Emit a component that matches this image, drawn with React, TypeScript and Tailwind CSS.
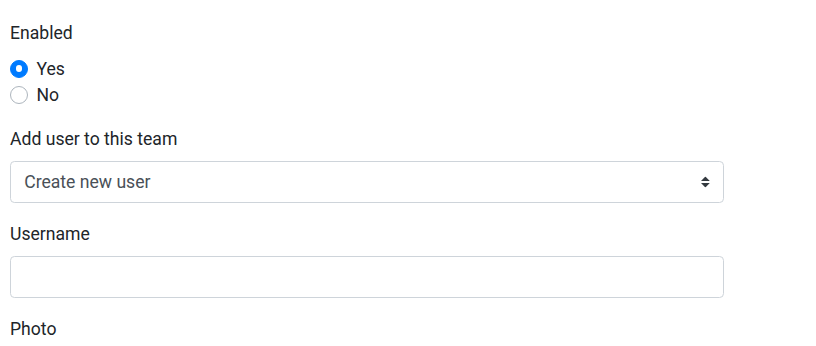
import React from 'react';

function Radio({ label, checked }: { label: string; checked?: boolean }) {
  return (
    <label className="relative flex items-center h-[26.4px] pl-[26.4px] cursor-pointer">
      <span
        className={
          checked
            ? 'absolute left-0 top-[4.4px] w-[17.6px] h-[17.6px] rounded-full bg-[#007bff] border border-[#007bff] flex items-center justify-center'
            : 'absolute left-0 top-[4.4px] w-[17.6px] h-[17.6px] rounded-full bg-white border border-[#adb5bd]'
        }
      >
        {checked && <span className="block w-[6.6px] h-[6.6px] rounded-full bg-white" />}
      </span>
      <span>{label}</span>
    </label>
  );
}

export default function App() {
  return (
    <div
      className="bg-white text-[#212529] text-[17.6px] leading-[26.4px] pl-[10px] pt-[20.4px] min-h-screen"
      style={{ fontFamily: 'Roboto, "Liberation Sans", sans-serif' }}
    >
      <div className="w-[714px]">
        <div className="mb-[17.6px]">
          <div className="mb-[8.8px]">Enabled</div>
          <Radio label="Yes" checked />
          <Radio label="No" />
        </div>

        <div className="mb-[17.6px]">
          <div className="mb-[8.8px]">Add user to this team</div>
          <div className="relative h-[42.2px] border border-[#ced4da] rounded-[4.4px] bg-white flex items-center pl-[13.2px] text-[#495057]">
            <span>Create new user</span>
            <svg
              className="absolute right-[13.2px] top-1/2 -translate-y-1/2"
              width="8.8"
              height="11"
              viewBox="0 0 4 5"
            >
              <path fill="#343a40" d="M2 0L0 2h4zm0 5L0 3h4z" />
            </svg>
          </div>
        </div>

        <div className="mb-[17.6px]">
          <div className="mb-[8.8px]">Username</div>
          <div className="h-[42.2px] border border-[#ced4da] rounded-[4.4px] bg-white" />
        </div>

        <div>
          <div className="mb-[8.8px]">Photo</div>
        </div>
      </div>
    </div>
  );
}
